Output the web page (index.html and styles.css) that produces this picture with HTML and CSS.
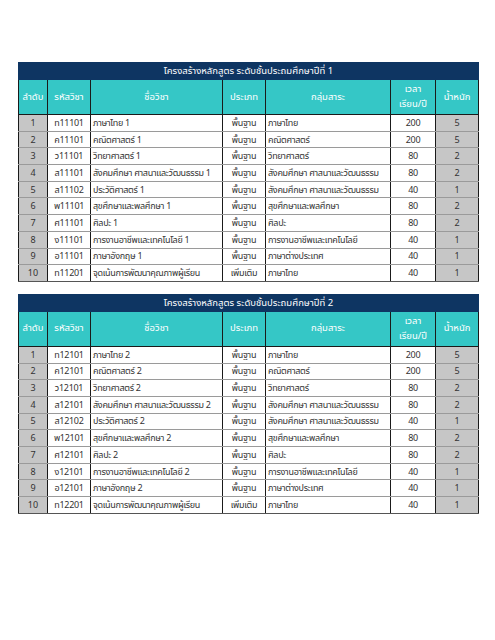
FILE: index.html
```html
<!DOCTYPE html>
<html lang="th">
<head>
<meta charset="utf-8">
<link rel="stylesheet" href="styles.css">
</head>
<body>
<div class="page">
  <table class="curr">
    <colgroup>
      <col class="c1"><col class="c2"><col class="c3"><col class="c4"><col class="c5"><col class="c6"><col class="c7">
    </colgroup>
    <thead>
      <tr class="title"><th colspan="7">โครงสร้างหลักสูตร ระดับชั้นประถมศึกษาปีที่ 1</th></tr>
      <tr class="head"><th>ลำดับ</th><th>รหัสวิชา</th><th>ชื่อวิชา</th><th>ประเภท</th><th>กลุ่มสาระ</th><th>เวลา<br>เรียน/ปี</th><th>น้ำหนัก</th></tr>
    </thead>
    <tbody>
      <tr><td class="g">1</td><td class="ctr">ท11101</td><td>ภาษาไทย 1</td><td class="ctr">พื้นฐาน</td><td>ภาษาไทย</td><td class="ctr">200</td><td class="g">5</td></tr>
      <tr><td class="g">2</td><td class="ctr">ค11101</td><td>คณิตศาสตร์ 1</td><td class="ctr">พื้นฐาน</td><td>คณิตศาสตร์</td><td class="ctr">200</td><td class="g">5</td></tr>
      <tr><td class="g">3</td><td class="ctr">ว11101</td><td>วิทยาศาสตร์ 1</td><td class="ctr">พื้นฐาน</td><td>วิทยาศาสตร์</td><td class="ctr">80</td><td class="g">2</td></tr>
      <tr><td class="g">4</td><td class="ctr">ส11101</td><td>สังคมศึกษา ศาสนาและวัฒนธรรม 1</td><td class="ctr">พื้นฐาน</td><td>สังคมศึกษา ศาสนาและวัฒนธรรม</td><td class="ctr">80</td><td class="g">2</td></tr>
      <tr><td class="g">5</td><td class="ctr">ส11102</td><td>ประวัติศาสตร์ 1</td><td class="ctr">พื้นฐาน</td><td>สังคมศึกษา ศาสนาและวัฒนธรรม</td><td class="ctr">40</td><td class="g">1</td></tr>
      <tr><td class="g">6</td><td class="ctr">พ11101</td><td>สุขศึกษาและพลศึกษา 1</td><td class="ctr">พื้นฐาน</td><td>สุขศึกษาและพลศึกษา</td><td class="ctr">80</td><td class="g">2</td></tr>
      <tr><td class="g">7</td><td class="ctr">ศ11101</td><td>ศิลปะ 1</td><td class="ctr">พื้นฐาน</td><td>ศิลปะ</td><td class="ctr">80</td><td class="g">2</td></tr>
      <tr><td class="g">8</td><td class="ctr">ง11101</td><td>การงานอาชีพและเทคโนโลยี 1</td><td class="ctr">พื้นฐาน</td><td>การงานอาชีพและเทคโนโลยี</td><td class="ctr">40</td><td class="g">1</td></tr>
      <tr><td class="g">9</td><td class="ctr">อ11101</td><td>ภาษาอังกฤษ 1</td><td class="ctr">พื้นฐาน</td><td>ภาษาต่างประเทศ</td><td class="ctr">40</td><td class="g">1</td></tr>
      <tr><td class="g">10</td><td class="ctr">ท11201</td><td>จุดเน้นการพัฒนาคุณภาพผู้เรียน</td><td class="ctr">เพิ่มเติม</td><td>ภาษาไทย</td><td class="ctr">40</td><td class="g">1</td></tr>
    </tbody>
  </table>

  <table class="curr">
    <colgroup>
      <col class="c1"><col class="c2"><col class="c3"><col class="c4"><col class="c5"><col class="c6"><col class="c7">
    </colgroup>
    <thead>
      <tr class="title"><th colspan="7">โครงสร้างหลักสูตร ระดับชั้นประถมศึกษาปีที่ 2</th></tr>
      <tr class="head"><th>ลำดับ</th><th>รหัสวิชา</th><th>ชื่อวิชา</th><th>ประเภท</th><th>กลุ่มสาระ</th><th>เวลา<br>เรียน/ปี</th><th>น้ำหนัก</th></tr>
    </thead>
    <tbody>
      <tr><td class="g">1</td><td class="ctr">ท12101</td><td>ภาษาไทย 2</td><td class="ctr">พื้นฐาน</td><td>ภาษาไทย</td><td class="ctr">200</td><td class="g">5</td></tr>
      <tr><td class="g">2</td><td class="ctr">ค12101</td><td>คณิตศาสตร์ 2</td><td class="ctr">พื้นฐาน</td><td>คณิตศาสตร์</td><td class="ctr">200</td><td class="g">5</td></tr>
      <tr><td class="g">3</td><td class="ctr">ว12101</td><td>วิทยาศาสตร์ 2</td><td class="ctr">พื้นฐาน</td><td>วิทยาศาสตร์</td><td class="ctr">80</td><td class="g">2</td></tr>
      <tr><td class="g">4</td><td class="ctr">ส12101</td><td>สังคมศึกษา ศาสนาและวัฒนธรรม 2</td><td class="ctr">พื้นฐาน</td><td>สังคมศึกษา ศาสนาและวัฒนธรรม</td><td class="ctr">80</td><td class="g">2</td></tr>
      <tr><td class="g">5</td><td class="ctr">ส12102</td><td>ประวัติศาสตร์ 2</td><td class="ctr">พื้นฐาน</td><td>สังคมศึกษา ศาสนาและวัฒนธรรม</td><td class="ctr">40</td><td class="g">1</td></tr>
      <tr><td class="g">6</td><td class="ctr">พ12101</td><td>สุขศึกษาและพลศึกษา 2</td><td class="ctr">พื้นฐาน</td><td>สุขศึกษาและพลศึกษา</td><td class="ctr">80</td><td class="g">2</td></tr>
      <tr><td class="g">7</td><td class="ctr">ศ12101</td><td>ศิลปะ 2</td><td class="ctr">พื้นฐาน</td><td>ศิลปะ</td><td class="ctr">80</td><td class="g">2</td></tr>
      <tr><td class="g">8</td><td class="ctr">ง12101</td><td>การงานอาชีพและเทคโนโลยี 2</td><td class="ctr">พื้นฐาน</td><td>การงานอาชีพและเทคโนโลยี</td><td class="ctr">40</td><td class="g">1</td></tr>
      <tr><td class="g">9</td><td class="ctr">อ12101</td><td>ภาษาอังกฤษ 2</td><td class="ctr">พื้นฐาน</td><td>ภาษาต่างประเทศ</td><td class="ctr">40</td><td class="g">1</td></tr>
      <tr><td class="g">10</td><td class="ctr">ท12201</td><td>จุดเน้นการพัฒนาคุณภาพผู้เรียน</td><td class="ctr">เพิ่มเติม</td><td>ภาษาไทย</td><td class="ctr">40</td><td class="g">1</td></tr>
    </tbody>
  </table>
</div>
</body>
</html>
```

FILE: styles.css
```css
html, body {
  margin: 0;
  padding: 0;
  background: #ffffff;
}
.page {
  padding: 62px 0 0 18px;
  display: flex;
  flex-direction: column;
  gap: 12px;
  font-family: Tahoma, "Noto Sans Thai", "Noto Sans", "DejaVu Sans", sans-serif;
}
.curr {
  border-collapse: collapse;
  table-layout: fixed;
  width: 460px;
  font-size: 9px;
  color: #333333;
}
.c1 { width: 29px; }
.c2 { width: 43px; }
.c3 { width: 132px; }
.c4 { width: 43px; }
.c5 { width: 125px; }
.c6 { width: 45px; }
.c7 { width: 43px; }
.curr td, .curr th {
  padding: 0 2px;
  white-space: nowrap;
  overflow: hidden;
  line-height: 12px;
}
.title th {
  background: #0e3562;
  color: #ffffff;
  font-weight: normal;
  font-size: 9.5px;
  height: 16px;
  text-align: center;
  border: 1px solid #0e3562;
}
.head th {
  background: #35c7c6;
  color: #ffffff;
  font-weight: normal;
  font-size: 9.5px;
  line-height: 15px;
  height: 34px;
  text-align: center;
  border: 1px solid #1a1a1a;
  border-top: none;
}
.curr td {
  height: 15.7px;
  letter-spacing: -0.3px;
  border-left: 1px solid #1a1a1a;
  border-right: 1px solid #1a1a1a;
  border-bottom: 1px solid #9a9a9a;
  text-align: left;
}
.curr tbody tr:last-child td {
  border-bottom: 1px solid #555555;
}
.curr td.ctr { text-align: center; }
.curr td.g {
  background: #c6c6c6;
  text-align: center;
  letter-spacing: 0;
}
```
